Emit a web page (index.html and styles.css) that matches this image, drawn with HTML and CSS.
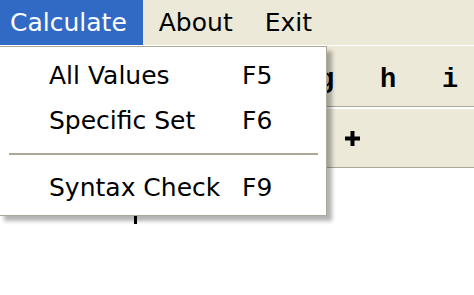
FILE: index.html
```html
<!DOCTYPE html>
<html lang="en">
<head>
    <meta charset="UTF-8">
    <title>Calculator</title>
    <link rel="stylesheet" href="styles.css">
</head>
<body>
    <!-- Barra de menu -->
    <div class="menubar">
        <span class="menu-title active">Calculate</span>
        <span class="menu-title">About</span>
        <span class="menu-title">Exit</span>
    </div>

    <!-- Barra de ferramentas -->
    <div class="toolbar">
        <div class="tool-row keys">
            <span>g</span>
            <span>h</span>
            <span>i</span>
        </div>
        <div class="tool-row ops">
            <svg class="plus" width="15" height="15" viewBox="0 0 15 15">
                <path d="M5.5 0h4v5.5h5.5v4h-5.5v5.5h-4v-5.5h-5.5v-4h5.5z" fill="#000"/>
            </svg>
        </div>
    </div>

    <div class="editor">
        <span class="caret"></span>
    </div>

    <!-- Menu aberto -->
    <div class="dropdown">
        <div class="item"><span>All Values</span><span>F5</span></div>
        <div class="item"><span>Specific Set</span><span>F6</span></div>
        <div class="separator"></div>
        <div class="item"><span>Syntax Check</span><span>F9</span></div>
    </div>
</body>
</html>
```

FILE: styles.css
```css
body {
    margin: 0;
    font-family: "DejaVu Sans", Verdana, sans-serif;
    background-color: white;
    color: black;
    height: 295px;
    overflow: hidden;
    display: flex;
    flex-direction: column;
}

/* Barra de menu */
.menubar {
    display: flex;
    height: 45px;
    background-color: #ece9d8;
    border-bottom: 1px solid #fff;
}

.menu-title {
    display: flex;
    align-items: center;
    padding: 0 16px 0 10px;
    font-size: 25px;
    margin-right: 6px;
}

.menu-title.active {
    background-color: #316ac5;
    color: white;
}

/* Barra de ferramentas */
.toolbar {
    background-color: #ece9d8;
    border-bottom: 1px solid #aca899;
}

.tool-row {
    display: flex;
    align-items: center;
}

.keys {
    height: 52px;
    padding-top: 8px;
    border-bottom: 1px solid #aca899;
    font-family: "Liberation Mono", "Courier New", monospace;
    font-weight: bold;
    font-size: 27px;
    padding-left: 318px;
    gap: 46px;
}

.keys span {
    width: 16px;
}

.ops {
    height: 58px;
    border-top: 2px solid #fff;
    padding-left: 345px;
}

.editor {
    flex: 1;
    position: relative;
}

.caret {
    position: absolute;
    left: 134px;
    top: 48px;
    width: 3px;
    height: 8px;
    background-color: black;
}

/* Menu aberto */
.dropdown {
    position: absolute;
    left: -1px;
    top: 46px;
    width: 326px;
    padding: 6px 0 5px;
    background-color: white;
    border: 1px solid #aca899;
    box-shadow: 5px 5px 4px rgba(0, 0, 0, 0.3);
}

.item {
    display: grid;
    grid-template-columns: 193px auto;
    align-items: center;
    height: 45px;
    padding-left: 49px;
    font-size: 25px;
}

.separator {
    height: 22px;
    display: flex;
    align-items: center;
    padding: 0 8px 0 9px;
}

.separator::before {
    content: "";
    flex: 1;
    border-top: 2px solid #aca899;
}
```
